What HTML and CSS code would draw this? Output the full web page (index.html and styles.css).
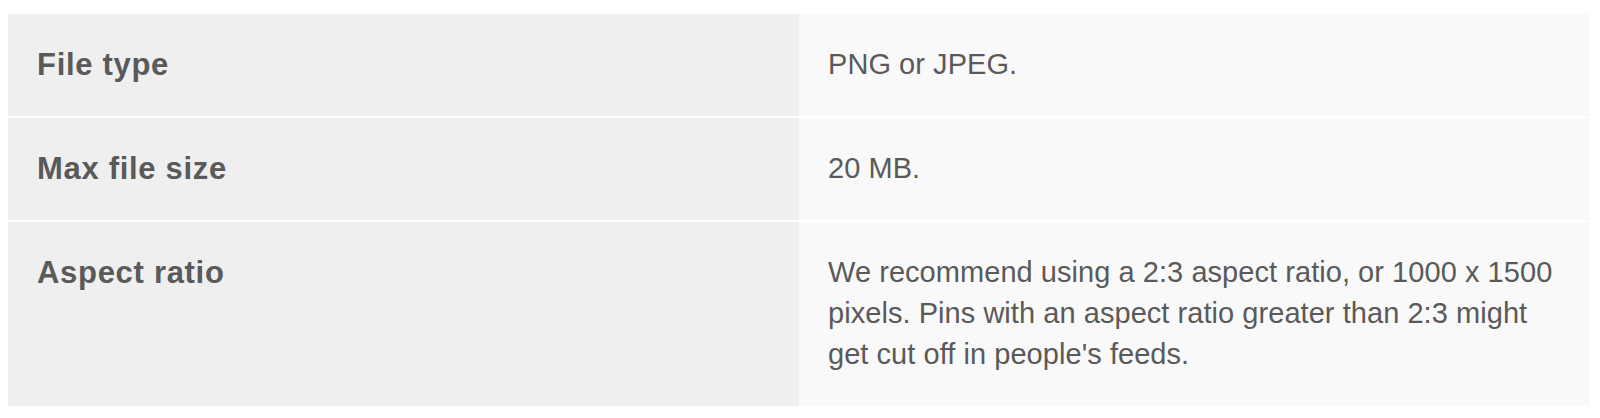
FILE: index.html
```html
<!DOCTYPE html>
<html>
<head>
<meta charset="utf-8">
<link rel="stylesheet" href="styles.css">
</head>
<body>
<table class="specs">
  <tr class="row">
    <th class="label">File type</th>
    <td class="value">PNG or JPEG.</td>
  </tr>
  <tr class="row">
    <th class="label">Max file size</th>
    <td class="value">20 MB.</td>
  </tr>
  <tr class="row">
    <th class="label">Aspect ratio</th>
    <td class="value">We recommend using a 2:3 aspect ratio, or 1000 x 1500 pixels. Pins with an aspect ratio greater than 2:3 might get cut off in people's feeds.</td>
  </tr>
</table>
</body>
</html>
```
FILE: styles.css
```css
html, body {
  margin: 0;
  background: #ffffff;
}
body {
  padding: 14px 0 0 8px;
  font-family: "Liberation Sans", Arial, sans-serif;
  color: #5a5a5a;
}
.specs {
  width: 1581px;
  border-collapse: collapse;
  table-layout: fixed;
}
.row {
  border-top: 2px solid #ffffff;
}
.row:first-child {
  border-top: none;
}
.label, .value {
  vertical-align: top;
  text-align: left;
  padding: 30px 29px 31px 29px;
  line-height: 41px;
}
.label {
  width: 791px;
  box-sizing: border-box;
  background: #efefef;
  font-weight: bold;
  font-size: 31px;
  letter-spacing: 0.7px;
}
.value {
  background: #f9f9f9;
  font-weight: normal;
  font-size: 29px;
  letter-spacing: 0.05px;
}
```
